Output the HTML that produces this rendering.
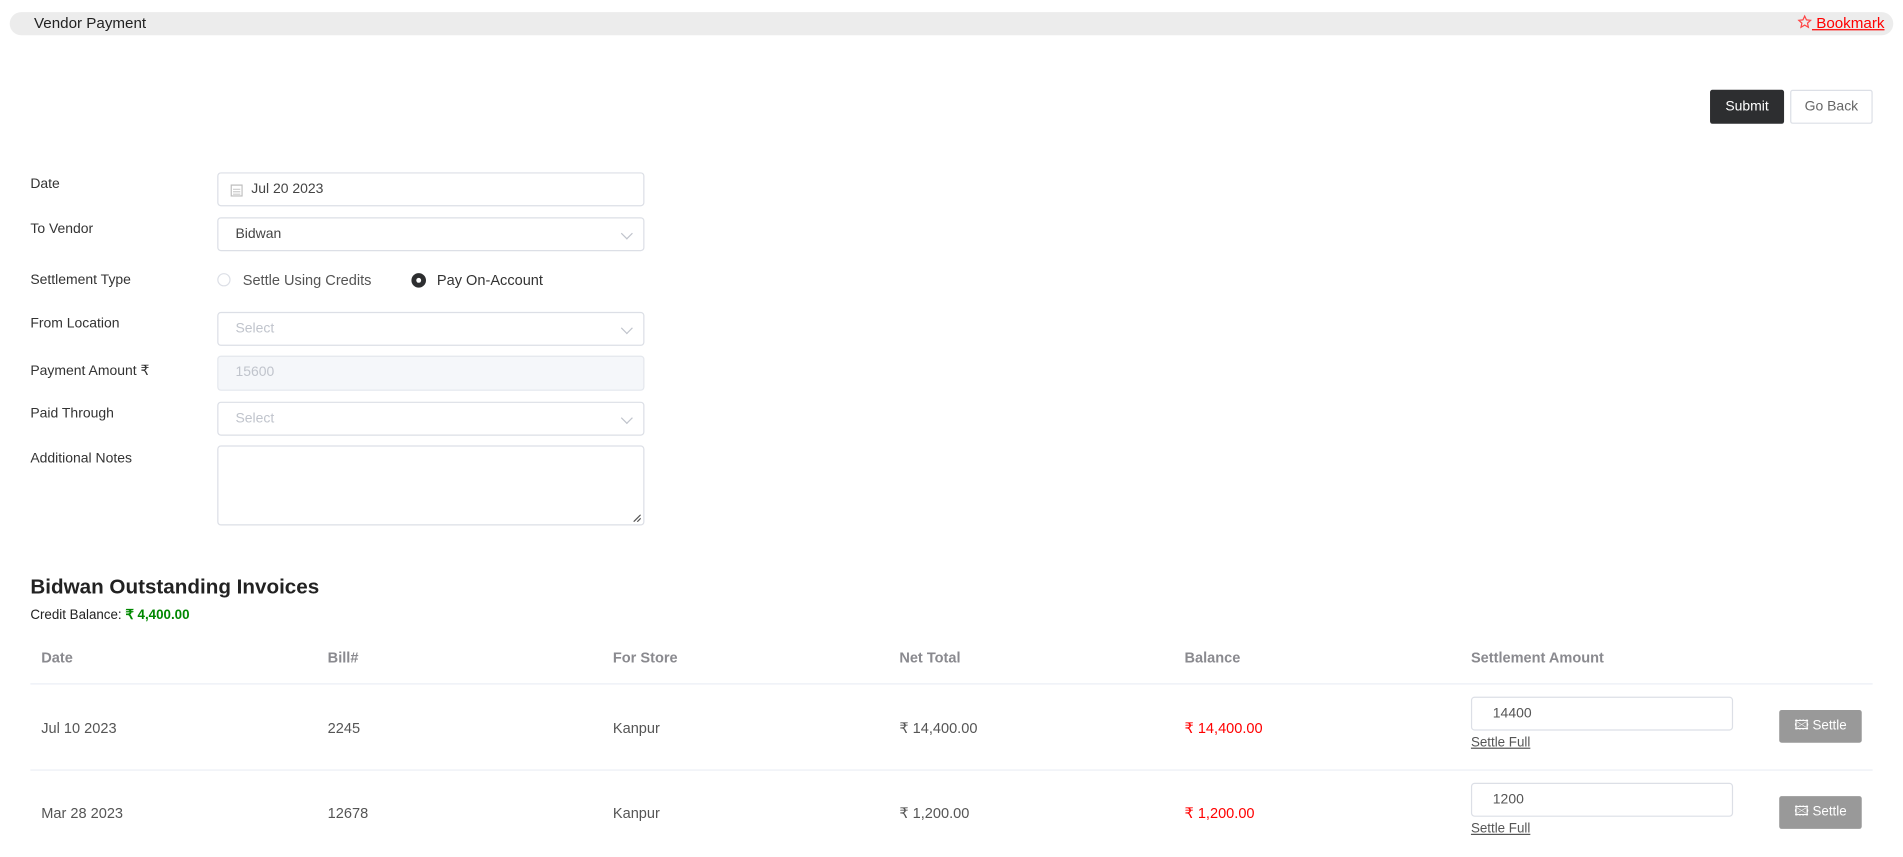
<!DOCTYPE html>
<html><head><meta charset="utf-8">
<style>
html,body{margin:0;padding:0;width:1903px;height:856px;overflow:hidden;background:#fff;}
#w{position:absolute;left:0;top:0;width:1568px;height:706px;transform:scale(1.21365);transform-origin:0 0;font-family:"Liberation Sans",Arial,sans-serif;color:#333;}
.a{position:absolute;}
.lbl{position:absolute;left:25px;font-size:11.5px;color:#333;}
.inp{position:absolute;left:179px;width:352px;border:1px solid #dcdfe6;border-radius:3px;box-sizing:border-box;background:#fff;font-size:11.5px;}
.inp span{position:absolute;left:14px;top:7px;}
.chev{position:absolute;right:10px;top:9px;width:6px;height:6px;border-right:1px solid #c0c4cc;border-bottom:1px solid #c0c4cc;transform:rotate(45deg);}
.th{position:absolute;top:535px;font-size:12px;font-weight:bold;color:#8a8a8f;}
.td{position:absolute;font-size:12px;color:#555;}
.red{color:#f00;}
.hr{position:absolute;left:25px;width:1518px;height:1px;background:#ebeef5;}
.sinp{position:absolute;left:1212px;width:216px;height:28px;border:1px solid #dcdfe6;border-radius:3px;box-sizing:border-box;font-size:11.5px;color:#555;}
.sinp span{position:absolute;left:17px;top:7px;}
.sf{position:absolute;left:1212px;font-size:11px;color:#555;text-decoration:underline;}
.sb{position:absolute;left:1466px;width:68px;height:27px;background:#999;border-radius:2px;color:#fff;font-size:11px;text-align:center;line-height:27px;}
</style></head><body><div id="w">
<div class="a" style="left:8px;top:10px;width:1552px;height:19px;background:#ececec;border-radius:10px;"></div>
<div class="a" style="left:28px;top:12px;font-size:12.5px;color:#222;">Vendor Payment</div>
<div class="a" style="left:1481px;top:12px;font-size:12.5px;color:#f00;text-decoration:underline;"><svg width="12" height="12" viewBox="0 0 24 24" style="vertical-align:-1px"><path d="M12 2.5l2.9 6.3 6.8.7-5.1 4.6 1.5 6.8L12 17.4l-6.1 3.5 1.5-6.8-5.1-4.6 6.8-.7z" fill="none" stroke="#f44" stroke-width="2"/></svg> Bookmark</div>
<div class="a" style="left:1409px;top:74px;width:61px;height:28px;background:#2d2e30;border-radius:2px;color:#fff;font-size:11.5px;text-align:center;line-height:28px;">Submit</div>
<div class="a" style="left:1475px;top:74px;width:68px;height:28px;border:1px solid #dcdfe6;border-radius:2px;box-sizing:border-box;color:#666;font-size:11.5px;text-align:center;line-height:26px;">Go Back</div>

<div class="lbl" style="top:146px">Date</div>
<div class="inp" style="top:142px;height:28px;"><svg class="a" style="left:10px;top:8px" width="10" height="11" viewBox="0 0 10 11"><rect x="0.5" y="1.5" width="9" height="9" fill="none" stroke="#bbb"/><path d="M2 5h6M2 7h6M2 9h6" stroke="#ccc"/></svg><span style="left:27px;color:#444;">Jul 20 2023</span></div>
<div class="lbl" style="top:183px">To Vendor</div>
<div class="inp" style="top:179px;height:28px;"><span style="color:#444;">Bidwan</span><i class="chev"></i></div>
<div class="lbl" style="top:225px">Settlement Type</div>
<div class="a" style="left:179px;top:225px;width:11px;height:11px;border:1px solid #dcdfe6;border-radius:50%;box-sizing:border-box;"></div>
<div class="a" style="left:200px;top:224px;font-size:12px;color:#555;">Settle Using Credits</div>
<div class="a" style="left:339px;top:225px;width:12px;height:12px;background:#2d2e30;border-radius:50%;"><div class="a" style="left:4px;top:4px;width:4px;height:4px;background:#fff;border-radius:50%;"></div></div>
<div class="a" style="left:360px;top:224px;font-size:12px;color:#333;">Pay On-Account</div>
<div class="lbl" style="top:261px">From Location</div>
<div class="inp" style="top:257px;height:28px;"><span style="color:#c0c4cc;">Select</span><i class="chev"></i></div>
<div class="lbl" style="top:298px">Payment Amount ₹</div>
<div class="inp" style="top:293px;height:29px;background:#f5f7fa;border-color:#e4e7ed;"><span style="color:#c0c4cc;">15600</span></div>
<div class="lbl" style="top:335px">Paid Through</div>
<div class="inp" style="top:331px;height:28px;"><span style="color:#c0c4cc;">Select</span><i class="chev"></i></div>
<div class="lbl" style="top:372px">Additional Notes</div>
<div class="inp" style="top:367px;height:66px;"><svg class="a" style="right:2px;bottom:2px" width="6" height="6"><path d="M0 6L6 0M3 6L6 3" stroke="#555"/></svg></div>

<div class="a" style="left:25px;top:474px;font-size:17px;font-weight:bold;color:#222;">Bidwan Outstanding Invoices</div>
<div class="a" style="left:25px;top:500px;font-size:11px;color:#222;">Credit Balance: <b style="color:#080;">₹ 4,400.00</b></div>
<div class="th" style="left:34px">Date</div>
<div class="th" style="left:270px">Bill#</div>
<div class="th" style="left:505px">For Store</div>
<div class="th" style="left:741px">Net Total</div>
<div class="th" style="left:976px">Balance</div>
<div class="th" style="left:1212px">Settlement Amount</div>
<div class="hr" style="top:563px"></div>
<div class="hr" style="top:634px"></div>

<div class="td" style="left:34px;top:593px">Jul 10 2023</div>
<div class="td" style="left:270px;top:593px">2245</div>
<div class="td" style="left:505px;top:593px">Kanpur</div>
<div class="td" style="left:741px;top:593px">₹ 14,400.00</div>
<div class="td red" style="left:976px;top:593px">₹ 14,400.00</div>
<div class="sinp" style="top:574px"><span>14400</span></div>
<div class="sf" style="top:606px">Settle Full</div>
<div class="sb" style="top:585px">&#x1F5BE; Settle</div>

<div class="td" style="left:34px;top:663px">Mar 28 2023</div>
<div class="td" style="left:270px;top:663px">12678</div>
<div class="td" style="left:505px;top:663px">Kanpur</div>
<div class="td" style="left:741px;top:663px">₹ 1,200.00</div>
<div class="td red" style="left:976px;top:663px">₹ 1,200.00</div>
<div class="sinp" style="top:645px"><span>1200</span></div>
<div class="sf" style="top:677px">Settle Full</div>
<div class="sb" style="top:656px">&#x1F5BE; Settle</div>
</div></body></html>
